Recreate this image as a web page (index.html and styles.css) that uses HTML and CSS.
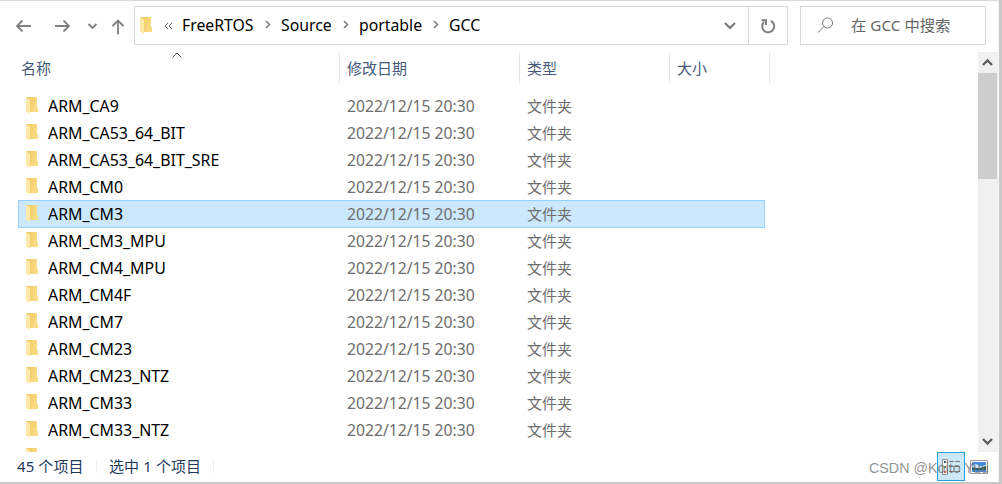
FILE: index.html
```html
<!DOCTYPE html>
<html lang="zh-CN">
  <head>
    <meta charset="UTF-8" />
    <meta name="viewport" content="width=device-width, initial-scale=1.0" />
    <title>GCC</title>
    <link rel="stylesheet" href="styles.css">
  </head>
  <body>
    <!-- Shared folder icon -->
    <svg class="defs" width="0" height="0">
      <defs>
        <linearGradient id="back" x1="0" x2="1" y1="0" y2="0.3">
          <stop offset="0" stop-color="#efc55c" />
          <stop offset="1" stop-color="#fbdc86" />
        </linearGradient>
        <symbol id="folder" viewBox="0 0 12 17">
          <path d="M0 0H11V10H12V15H0Z" fill="url(#back)" />
          <path d="M0 0L4 2.500V17L0 14.500Z" fill="#ffe9a8" />
        </symbol>
      </defs>
    </svg>

    <div class="window">
      <div class="toolbar">
        <svg class="nav" width="134" height="38" viewBox="0 0 134 38">
          <path d="M31 20H17M22.500 14.500L17 20L22.500 25.500" />
          <path d="M55 20H69M63.500 14.500L69 20L63.500 25.500" />
          <path d="M88.500 18L92.500 22L96.500 18" />
          <path d="M118 28.500V15M112.500 20L118 14.500L123.500 20" />
        </svg>
        <div class="address">
          <svg class="folder" width="12" height="17"><use href="#folder" /></svg>
          <svg class="more" width="9" height="8" viewBox="0 0 9 8">
            <path d="M4 1L1 4L4 7M8 1L5 4L8 7" />
          </svg>
          <span class="crumb freertos">FreeRTOS</span>
          <svg class="sep" width="6" height="9" viewBox="0 0 6 9"><path d="M1 1L4.500 4.500L1 8" /></svg>
          <span class="crumb source">Source</span>
          <svg class="sep" width="6" height="9" viewBox="0 0 6 9"><path d="M1 1L4.500 4.500L1 8" /></svg>
          <span class="crumb portable">portable</span>
          <svg class="sep" width="6" height="9" viewBox="0 0 6 9"><path d="M1 1L4.500 4.500L1 8" /></svg>
          <span class="crumb">GCC</span>
          <svg class="drop" width="12" height="8" viewBox="0 0 12 8"><path d="M1 1L6 6L11 1" /></svg>
          <span class="refresh">
            <svg width="16" height="16" viewBox="0 0 16 16">
              <path d="M4 4A6 6 0 1 0 11 3M1.500 2.200H6V7" />
            </svg>
          </span>
        </div>
        <div class="search">
          <svg width="17" height="17" viewBox="0 0 17 17">
            <circle cx="10.500" cy="6" r="5" />
            <path d="M7 9.500L1 15.500" />
          </svg>
          <span>在 GCC 中搜索</span>
        </div>
      </div>

      <div class="content">
        <div class="list">
          <div class="head">
            <span class="col name">名称
              <svg class="sort" width="10" height="6" viewBox="0 0 10 6"><path d="M0.500 5.500L5 1L9.500 5.500" /></svg>
            </span>
            <span class="col date">修改日期</span>
            <span class="col type">类型</span>
            <span class="col size">大小</span>
          </div>
          <div class="rows" id="rows"></div>
        </div>
        <div class="scrollbar">
          <svg width="20" height="21" viewBox="0 0 20 21"><path d="M5 13L9.500 8.500L14 13" /></svg>
          <div class="thumb"></div>
          <svg class="down" width="20" height="21" viewBox="0 0 20 21"><path d="M5 8L9.500 12.500L14 8" /></svg>
        </div>
      </div>

      <div class="status">
        <span class="total">45 个项目</span>
        <span class="selection">选中 1 个项目</span>
        <div class="views">
          <span class="view active">
            <svg width="18" height="16" viewBox="0 0 18 16">
              <path d="M0.500 0.500H5.500V15.500H0.500Z" fill="#fff" stroke="#8c8c8c" />
              <path d="M2 2H4V4H2Z" fill="#315b83" />
              <path d="M2 7H4V9H2Z" fill="#448a74" />
              <path d="M2 12H4V14H2Z" fill="#ce6852" />
              <path d="M7 2.500H12M13 2.500H18M7 7.500H12M13 7.500H18M7 12.500H12M13 12.500H18" stroke="#777" />
            </svg>
          </span>
          <span class="view">
            <svg width="18" height="14" viewBox="0 0 18 14">
              <path d="M0.500 0.500H17.500V13.500H0.500Z" fill="#fff" stroke="#999" />
              <path d="M2 2H16V12H2Z" fill="#4389dc" />
              <path d="M2 6L6 4L10 6L16 5V9H2Z" fill="#c5e1f3" />
              <path d="M2 7L6 8L10 8L16 6V10H2Z" fill="#315d62" />
            </svg>
          </span>
        </div>
        <span class="watermark">CSDN @Koito Yuu</span>
      </div>
    </div>

    <script>
      const folders = [
        "ARM_CA9",
        "ARM_CA53_64_BIT",
        "ARM_CA53_64_BIT_SRE",
        "ARM_CM0",
        "ARM_CM3",
        "ARM_CM3_MPU",
        "ARM_CM4_MPU",
        "ARM_CM4F",
        "ARM_CM7",
        "ARM_CM23",
        "ARM_CM23_NTZ",
        "ARM_CM33",
        "ARM_CM33_NTZ",
      ];

      const icon = '<svg class="folder" width="12" height="17"><use href="#folder" /></svg>';

      // The next row only peeks out above the status bar, so it is just an icon
      document.getElementById("rows").innerHTML =
        folders
          .map(
            (name) => `
          <div class="row${name === "ARM_CM3" ? " selected" : ""}">
            ${icon}
            <span class="file">${name}</span>
            <span class="modified">2022/12/15 20:30</span>
            <span class="kind">文件夹</span>
          </div>`
          )
          .join("") + `<div class="row">${icon}</div>`;
    </script>
  </body>
</html>
```
FILE: styles.css
```css
* {
  box-sizing: border-box;
  margin: 0;
  padding: 0;
}
body {
  width: 1002px;
  height: 484px;
  overflow: hidden;
  background: #c9c9c9;
  font-family: "Noto Sans", "Noto Sans CJK SC", sans-serif;
  font-size: 15px;
  line-height: 27px;
  color: #000;
  white-space: nowrap;
}
svg {
  display: block;
  flex: none;
  fill: none;
}
.defs {
  position: absolute;
}
.window {
  display: flex;
  flex-direction: column;
  width: 999px;
  height: 482px;
  background: #fff;
  border-top: 1px solid #d9d9d9;
  border-right: 1px solid #f5f5f5;
}

/* Toolbar */
.toolbar {
  display: flex;
  height: 51px;
  padding-top: 5px;
}
.nav {
  stroke: #808080;
  stroke-width: 1.8;
}
.address {
  display: flex;
  align-items: center;
  width: 654px;
  height: 39px;
  padding-left: 5px;
  border: 1px solid #d9d9d9;
}
.more {
  margin: 0 9px 0 12px;
  stroke: #666;
}
.sep {
  margin: 0 10px 2px 11px;
  stroke: #808080;
  stroke-width: 1.6;
}
.crumb {
  font-size: 15.8px;
  line-height: 29px;
}
.freertos {
  width: 72px;
}
.source {
  width: 51px;
}
.portable {
  width: 63px;
}
.drop {
  margin-left: auto;
  margin-right: 12px;
  stroke: #777;
  stroke-width: 2;
}
.refresh {
  display: flex;
  align-items: center;
  justify-content: center;
  width: 39px;
  height: 37px;
  border-left: 1px solid #d9d9d9;
}
.refresh svg {
  stroke: #808080;
  stroke-width: 2;
}
.search {
  display: flex;
  align-items: center;
  width: 186px;
  height: 39px;
  margin-left: 12px;
  padding-left: 16px;
  border: 1px solid #d9d9d9;
  font-size: 15.3px;
  color: #666;
}
.search svg {
  margin-right: 17px;
  stroke: #777;
}

/* File list */
.content {
  display: flex;
  height: 400px;
}
.list {
  width: 978px;
  overflow: hidden;
}
.head {
  display: flex;
  height: 32px;
  line-height: 33px;
  color: #45597a;
}
.col {
  padding-left: 7px;
  border-right: 1px solid #e5e5e5;
}
.name {
  position: relative;
  width: 340px;
  padding-left: 21px;
}
.sort {
  position: absolute;
  left: 172px;
  top: 0;
  stroke: #666;
}
.date {
  width: 180px;
}
.type {
  width: 150px;
}
.size {
  width: 100px;
}
.rows {
  margin: 8px 0 0 18px;
}
.row {
  display: flex;
  width: 747px;
  height: 27px;
  padding-left: 8px;
  line-height: 29px;
}
.row .folder {
  margin: 5px 10px 0 0;
}
.selected {
  height: 28px;
  margin-bottom: -1px;
  background: #cce8ff;
  box-shadow: inset 0 0 0 1px #99d1ff;
}
.file {
  width: 299px;
  font-size: 15.9px;
}
.modified {
  width: 180px;
  font-size: 15.7px;
  color: #6d6d6d;
}
.kind {
  line-height: 28px;
  color: #6d6d6d;
}

/* Scrollbar */
.scrollbar {
  display: flex;
  flex-direction: column;
  width: 20px;
  background: #f0f0f0;
}
.scrollbar svg {
  stroke: #606060;
  stroke-width: 2.4;
}
.thumb {
  width: 19px;
  height: 106px;
  background: #cdcdcd;
}
.down {
  margin-top: auto;
}

/* Status bar */
.status {
  position: relative;
  display: flex;
  height: 30px;
  padding-left: 17px;
  color: #1e395b;
}
.total,
.selection {
  height: 13px;
  margin-top: 8px;
  line-height: 13px;
  letter-spacing: 0.1px;
  border-right: 1px solid #f0f0f0;
}
.total {
  width: 80px;
  margin-right: 12px;
}
.selection {
  width: 105px;
}
.views {
  display: flex;
  margin-left: auto;
  margin-right: 6px;
}
.view {
  display: flex;
  align-items: center;
  justify-content: center;
  width: 27px;
  height: 29px;
}
.active {
  width: 28px;
  background: #cce8f6;
  border: 1px solid #26a0da;
}
.watermark {
  position: absolute;
  left: 869px;
  top: 3px;
  font-family: "Liberation Sans", Arial, sans-serif;
  font-size: 14.3px;
  color: rgba(110, 110, 110, 0.75);
}
```
